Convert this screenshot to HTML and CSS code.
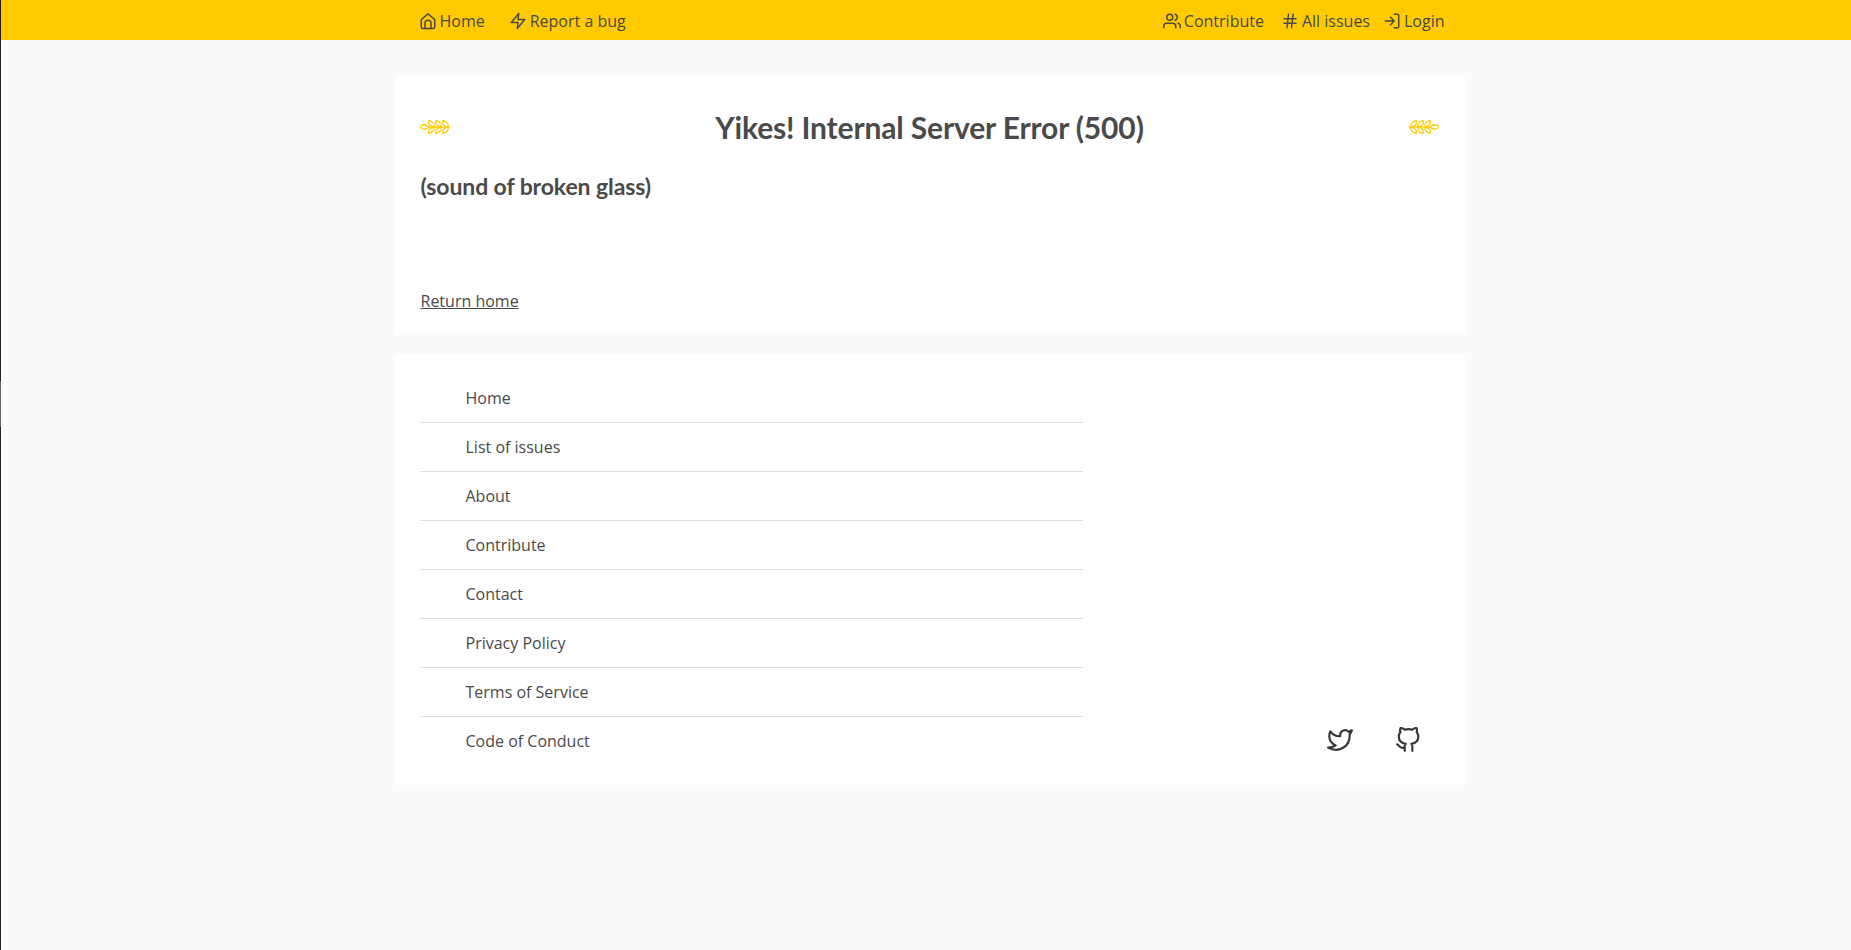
FILE: index.html
```html
<!DOCTYPE html>
<html lang="en">
<head>
<meta charset="utf-8">
<title>Yikes! Internal Server Error (500)</title>
<link rel="stylesheet" href="styles.css">
</head>
<body>
<div class="edge"><span class="edge-thumb"></span></div>
<header class="topbar">
  <nav class="topnav">
    <div class="navgroup navgroup-left">
      <a class="navlink" href="#"><svg class="navicon" viewBox="0 0 24 24"><path d="M3 10 12 2.500 21 10v10a2 2 0 0 1-2 2H5a2 2 0 0 1-2-2z"/><path d="M8 22v-7a4 4 0 0 1 8 0v7"/></svg>Home</a>
      <a class="navlink" href="#"><svg class="navicon" viewBox="0 0 24 24"><path d="M13 2 3 14h9l-1 8 10-12h-9z"/></svg>Report a bug</a>
    </div>
    <div class="navgroup navgroup-right">
      <a class="navlink navlink-wide" href="#"><svg class="navicon" viewBox="0 0 24 24"><path d="M17 21v-2a4 4 0 0 0-4-4H5a4 4 0 0 0-4 4v2"/><circle cx="9" cy="7" r="4"/><path d="M23 21v-2a4 4 0 0 0-3-3.870"/><path d="M16 3.130a4 4 0 0 1 0 7.750"/></svg>Contribute</a>
      <a class="navlink" href="#"><svg class="navicon" viewBox="0 0 24 24"><path d="M4 9h16M4 15h16M10 3 8 21M16 3l-2 18"/></svg>All issues</a>
      <a class="navlink" href="#"><svg class="navicon" viewBox="0 0 24 24"><path d="M15 3h4a2 2 0 0 1 2 2v14a2 2 0 0 1-2 2h-4"/><path d="M10 17l5-5-5-5M15 12H3"/></svg>Login</a>
    </div>
  </nav>
</header>
<main class="page">
  <section class="card card-error">
    <div class="titlerow">
      <svg class="wheat" viewBox="0 0 30 14"><path d="M9 7h21"/><path d="M0 7c2-3 6-3 9 0-3 3-7 3-9 0zM14 7c1-3-2-5.500-5-6.500-1 3 0 5.500 5 6.500zM14 7c1 3-2 5.500-5 6.500-1-3 0-5.500 5-6.500zM21 7c1-3-2-5.500-5-6.500-1 3 0 5.500 5 6.500zM21 7c1 3-2 5.500-5 6.500-1-3 0-5.500 5-6.500zM28 7c1-3-2-5.500-5-6.500-1 3 0 5.500 5 6.500zM28 7c1 3-2 5.500-5 6.500-1-3 0-5.500 5-6.500z"/></svg>
      <h1 class="title">Yikes! Internal Server Error (500)</h1>
      <svg class="wheat wheat-flip" viewBox="0 0 30 14"><path d="M9 7h21"/><path d="M0 7c2-3 6-3 9 0-3 3-7 3-9 0zM14 7c1-3-2-5.500-5-6.500-1 3 0 5.500 5 6.500zM14 7c1 3-2 5.500-5 6.500-1-3 0-5.500 5-6.500zM21 7c1-3-2-5.500-5-6.500-1 3 0 5.500 5 6.500zM21 7c1 3-2 5.500-5 6.500-1-3 0-5.500 5-6.500zM28 7c1-3-2-5.500-5-6.500-1 3 0 5.500 5 6.500zM28 7c1 3-2 5.500-5 6.500-1-3 0-5.500 5-6.500z"/></svg>
    </div>
    <h2 class="subtitle">(sound of broken glass)</h2>
    <a class="returnlink" href="#">Return home</a>
  </section>
  <footer class="card card-footer">
    <ul class="footlinks">
      <li class="footitem"><a class="footlink" href="#">Home</a></li>
      <li class="footitem"><a class="footlink" href="#">List of issues</a></li>
      <li class="footitem"><a class="footlink" href="#">About</a></li>
      <li class="footitem"><a class="footlink" href="#">Contribute</a></li>
      <li class="footitem"><a class="footlink" href="#">Contact</a></li>
      <li class="footitem"><a class="footlink" href="#">Privacy Policy</a></li>
      <li class="footitem"><a class="footlink" href="#">Terms of Service</a></li>
      <li class="footitem"><a class="footlink" href="#">Code of Conduct</a></li>
    </ul>
    <div class="social">
      <a class="sociallink" href="#"><svg class="socialicon" viewBox="0 0 24 24"><path d="M23 3a10.900 10.900 0 0 1-3 1.530 4.480 4.480 0 0 0-7.860 3v1A10.660 10.660 0 0 1 3 4s-4 9 5 13a11.640 11.640 0 0 1-7 2c9 5 20 0 20-11.500a4.500 4.500 0 0 0-.08-.83A7.720 7.720 0 0 0 23 3z"/></svg></a>
      <a class="sociallink" href="#"><svg class="socialicon" viewBox="0 0 24 24"><path d="M9 19c-5 1.500-5-2.500-7-3m14 6v-3.870a3.370 3.370 0 0 0-.94-2.610c3.140-.35 6.440-1.540 6.440-7A5.440 5.440 0 0 0 20 4.770 5.070 5.070 0 0 0 19.910 1S18.730.65 16 2.480a13.380 13.380 0 0 0-7 0C6.270.65 5.090 1 5.090 1A5.070 5.070 0 0 0 5 4.770a5.440 5.440 0 0 0-1.500 3.780c0 5.420 3.300 6.610 6.440 7A3.370 3.370 0 0 0 9 18.130V22"/></svg></a>
    </div>
  </footer>
</main>
</body>
</html>
```
FILE: styles.css
```css
* { box-sizing: border-box; }
html { margin: 0; padding: 0; }
body {
  margin: 0;
  padding: 0 0 0 8px;
  min-height: 950px;
  background: #fafafa;
  color: #4a4a4a;
  font-family: "Open Sans", sans-serif;
  font-size: 16px;
  line-height: 24px;
  overflow: hidden;
}
a { color: inherit; text-decoration: none; }
.edge {
  position: fixed;
  left: 0;
  top: 0;
  bottom: 0;
  width: 1px;
  background: #222;
}
.edge-thumb {
  position: absolute;
  left: 0;
  top: 381px;
  width: 1px;
  height: 46px;
  background: #666;
}
.topbar { height: 40px; background: #ffcb00; margin-left: -8px; padding-left: 8px; }
.topnav {
  width: 1070px;
  height: 40px;
  margin: 0 auto;
  padding: 2px 20px 0 24px;
  display: flex;
  justify-content: space-between;
  align-items: center;
}
.navgroup { display: flex; align-items: center; }
.navgroup-left { gap: 24px; }
.navgroup-right { gap: 13px; }
.navlink { display: flex; align-items: center; gap: 3px; color: #4a4a4a; }
.navlink-wide { margin-right: 4px; }
.navicon {
  width: 18px;
  height: 18px;
  fill: none;
  stroke: #4a4a4a;
  stroke-width: 2;
  stroke-linecap: round;
  stroke-linejoin: round;
}
.page {
  width: 1070px;
  margin: 36px auto 0;
  display: flex;
  flex-direction: column;
  gap: 19px;
}
.card { background: #fff; padding: 0 25px; }
.card-error { height: 259px; padding-top: 25px; display: flex; flex-direction: column; }
.titlerow { display: flex; align-items: center; justify-content: space-between; height: 52px; }
.title {
  margin: 0;
  font-family: "Lato", sans-serif;
  font-size: 30px;
  font-weight: 700;
  line-height: 52px;
  letter-spacing: -0.14px;
}
.wheat {
  width: 30px;
  height: 14px;
  fill: none;
  stroke: #ffcb00;
  stroke-width: 1.3;
}
.wheat-flip { transform: scaleX(-1); }
.subtitle {
  margin: 17px 0 0 1px;
  font-family: "Lato", sans-serif;
  font-size: 23px;
  font-weight: 700;
  line-height: 32px;
  letter-spacing: -0.1px;
}
.returnlink {
  margin: auto 0 22px 1px;
  align-self: flex-start;
  text-decoration: underline;
}
.card-footer {
  height: 431px;
  padding: 20px 25px 0;
  display: flex;
  justify-content: space-between;
}
.footlinks { list-style: none; margin: 0; padding: 0; width: 663px; }
.footitem { height: 49px; border-bottom: 1px solid #dedede; padding-left: 46px; display: flex; align-items: center; }
.footitem:last-child { border-bottom-color: transparent; }
.social { align-self: flex-end; display: flex; gap: 42px; padding: 0 19px 32px 0; }
.sociallink { display: block; height: 26px; }
.socialicon {
  display: block;
  width: 26px;
  height: 26px;
  fill: none;
  stroke: #363636;
  stroke-width: 2;
  stroke-linecap: round;
  stroke-linejoin: round;
}
```
